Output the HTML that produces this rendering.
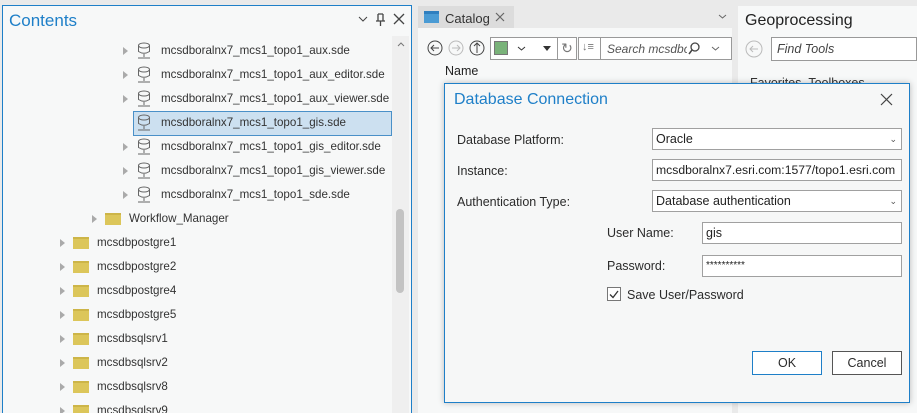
<!DOCTYPE html>
<html><head><style>
*{margin:0;padding:0;box-sizing:border-box}
html,body{width:917px;height:413px;overflow:hidden}
body{background:#eaeaea;font-family:"Liberation Sans",sans-serif;font-size:12.5px;color:#2b2b2b;position:relative}
.abs{position:absolute}
.row{position:absolute;height:24px;line-height:24px;white-space:nowrap;font-size:11.6px}
.tri{position:absolute;width:0;height:0;border-left:5px solid #aaa;border-top:4px solid transparent;border-bottom:4px solid transparent;top:8px}
.fold{position:absolute;width:16px;height:12px;background:#dcc65a;top:6px;border-top:2px solid #cdb548}
.lbl{position:absolute;color:#333}
.box{position:absolute;background:#fff;border:1px solid #a0a0a0;height:22px;line-height:20px;padding-left:3px;color:#222}
.chev{position:absolute;right:4px;top:0;font-size:9px;color:#555}
</style></head><body>
<svg width="0" height="0" style="position:absolute"><defs><symbol id="db" viewBox="0 0 14 18"><ellipse cx="7" cy="3.5" rx="5.5" ry="2.5" fill="none" stroke="#666"/><path d="M1.5 3.5v6q5.5 3.5 11 0v-6M7 12v3M1 16h12" fill="none" stroke="#666"/></symbol></defs></svg>
<!-- Contents panel -->
<div class="abs" style="left:2px;top:5px;width:410px;height:420px;background:#f7f8f8;border:1px solid #1e7fc8"></div>
<div class="abs" style="left:9px;top:11px;font-size:17px;color:#1e7fc8">Contents</div>
<svg class="abs" style="left:358px;top:16px" width="10" height="6"><path d="M1 1l4 4 4-4" fill="none" stroke="#444"/></svg>
<svg class="abs" style="left:375px;top:13px" width="10" height="14"><path d="M3 1h5M3 1v7h5V1M1 8h9M5.5 8v5" fill="none" stroke="#444" stroke-width="1.3"/></svg>
<svg class="abs" style="left:393px;top:13px" width="12" height="12"><path d="M1 1l10 10M11 1L1 11" stroke="#444" stroke-width="1.3"/></svg>
<div class="abs" style="left:392px;top:36px;width:17px;height:377px;background:#efefef"></div>
<div class="abs" style="left:396px;top:209px;width:8px;height:84px;background:#c3c3c3;border-radius:4px"></div>
<svg class="abs" style="left:397px;top:42px" width="8" height="5"><path d="M1 4l3-3 3 3" fill="none" stroke="#777"/></svg>
<div class="abs" style="left:133px;top:111px;width:259px;height:25px;background:#cce0f0;border:1px solid #4a90c8"></div>
<div class="row" style="top:39px;left:0"><div class="tri" style="left:123px"></div><svg class="abs" style="left:137px;top:3px" width="14" height="18"><use href="#db"/></svg><span class="lbl" style="left:161px">mcsdboralnx7_mcs1_topo1_aux.sde</span></div>
<div class="row" style="top:63px;left:0"><div class="tri" style="left:123px"></div><svg class="abs" style="left:137px;top:3px" width="14" height="18"><use href="#db"/></svg><span class="lbl" style="left:161px">mcsdboralnx7_mcs1_topo1_aux_editor.sde</span></div>
<div class="row" style="top:87px;left:0"><div class="tri" style="left:123px"></div><svg class="abs" style="left:137px;top:3px" width="14" height="18"><use href="#db"/></svg><span class="lbl" style="left:161px">mcsdboralnx7_mcs1_topo1_aux_viewer.sde</span></div>
<div class="row" style="top:111px;left:0"><svg class="abs" style="left:137px;top:3px" width="14" height="18"><use href="#db"/></svg><span class="lbl" style="left:161px">mcsdboralnx7_mcs1_topo1_gis.sde</span></div>
<div class="row" style="top:135px;left:0"><div class="tri" style="left:123px"></div><svg class="abs" style="left:137px;top:3px" width="14" height="18"><use href="#db"/></svg><span class="lbl" style="left:161px">mcsdboralnx7_mcs1_topo1_gis_editor.sde</span></div>
<div class="row" style="top:159px;left:0"><div class="tri" style="left:123px"></div><svg class="abs" style="left:137px;top:3px" width="14" height="18"><use href="#db"/></svg><span class="lbl" style="left:161px">mcsdboralnx7_mcs1_topo1_gis_viewer.sde</span></div>
<div class="row" style="top:183px;left:0"><div class="tri" style="left:123px"></div><svg class="abs" style="left:137px;top:3px" width="14" height="18"><use href="#db"/></svg><span class="lbl" style="left:161px">mcsdboralnx7_mcs1_topo1_sde.sde</span></div>
<div class="row" style="top:207px;left:0"><div class="tri" style="left:92px"></div><div class="fold" style="left:105px"></div><span class="lbl" style="left:129px">Workflow_Manager</span></div>
<div class="row" style="top:231px;left:0"><div class="tri" style="left:60px"></div><div class="fold" style="left:73px"></div><span class="lbl" style="left:97px">mcsdbpostgre1</span></div>
<div class="row" style="top:255px;left:0"><div class="tri" style="left:60px"></div><div class="fold" style="left:73px"></div><span class="lbl" style="left:97px">mcsdbpostgre2</span></div>
<div class="row" style="top:279px;left:0"><div class="tri" style="left:60px"></div><div class="fold" style="left:73px"></div><span class="lbl" style="left:97px">mcsdbpostgre4</span></div>
<div class="row" style="top:303px;left:0"><div class="tri" style="left:60px"></div><div class="fold" style="left:73px"></div><span class="lbl" style="left:97px">mcsdbpostgre5</span></div>
<div class="row" style="top:327px;left:0"><div class="tri" style="left:60px"></div><div class="fold" style="left:73px"></div><span class="lbl" style="left:97px">mcsdbsqlsrv1</span></div>
<div class="row" style="top:351px;left:0"><div class="tri" style="left:60px"></div><div class="fold" style="left:73px"></div><span class="lbl" style="left:97px">mcsdbsqlsrv2</span></div>
<div class="row" style="top:375px;left:0"><div class="tri" style="left:60px"></div><div class="fold" style="left:73px"></div><span class="lbl" style="left:97px">mcsdbsqlsrv8</span></div>
<div class="row" style="top:399px;left:0"><div class="tri" style="left:60px"></div><div class="fold" style="left:73px"></div><span class="lbl" style="left:97px">mcsdbsqlsrv9</span></div>

<!-- Catalog panel -->
<div class="abs" style="left:418px;top:6px;width:96px;height:22px;background:#dcdcdc"></div>
<div class="abs" style="left:424px;top:11px;width:15px;height:12px;background:#4a9bd4;border-top:3px solid #2f7fbf"></div>
<div class="abs" style="left:445px;top:11px;font-size:13px;color:#333">Catalog</div>
<svg class="abs" style="left:495px;top:12px" width="10" height="10"><path d="M1 1l8 8M9 1L1 9" stroke="#666" stroke-width="1.2"/></svg>
<svg class="abs" style="left:718px;top:14px" width="9" height="5"><path d="M1 1l3.5 3 3.5-3" fill="none" stroke="#666"/></svg>
<div class="abs" style="left:418px;top:28px;width:314px;height:385px;background:#f7f8f8"></div>
<svg class="abs" style="left:427px;top:39px" width="60" height="18"><circle cx="8" cy="9" r="7" fill="none" stroke="#444"/><path d="M12 9H4M7 6L4 9l3 3" fill="none" stroke="#444"/><circle cx="29" cy="9" r="7" fill="none" stroke="#bbb"/><path d="M25 9h8M30 6l3 3-3 3" fill="none" stroke="#bbb"/><circle cx="50" cy="9" r="7" fill="none" stroke="#444"/><path d="M50 14V4M47 7l3-3 3 3" fill="none" stroke="#444"/></svg>
<div class="abs" style="left:490px;top:37px;width:68px;height:23px;border:1px solid #999;background:#fff"></div>
<div class="abs" style="left:494px;top:41px;width:14px;height:14px;background:#7ab37a;border:1px solid #777"></div>
<svg class="abs" style="left:517px;top:46px" width="9" height="5"><path d="M1 1l3.5 3 3.5-3" fill="none" stroke="#333"/></svg>
<svg class="abs" style="left:543px;top:46px" width="8" height="5"><path d="M0 0h8L4 5z" fill="#333"/></svg>
<div class="abs" style="left:557px;top:37px;width:20px;height:23px;border:1px solid #999;background:#fff;font-size:14px;text-align:center;color:#777;line-height:20px">&#8635;</div>
<div class="abs" style="left:578px;top:37px;width:154px;height:23px;border:1px solid #999;background:#fff"></div>
<div class="abs" style="left:600px;top:37px;width:1px;height:23px;background:#999"></div>
<div class="abs" style="left:582px;top:41px;font-size:11px;color:#777">&#8595;&#8801;</div>
<div class="abs" style="left:607px;top:42px;font-style:italic;color:#555;font-size:12px;width:80px;overflow:hidden;white-space:nowrap">Search mcsdbora</div>
<svg class="abs" style="left:688px;top:42px" width="12" height="13"><circle cx="7" cy="5" r="4" fill="none" stroke="#444" stroke-width="1.3"/><path d="M4 8l-3 4" stroke="#444" stroke-width="1.5"/></svg>
<svg class="abs" style="left:711px;top:46px" width="9" height="5"><path d="M1 1l3.5 3 3.5-3" fill="none" stroke="#666"/></svg>
<div class="abs" style="left:445px;top:64px;color:#222">Name</div>

<!-- Geoprocessing -->
<div class="abs" style="left:738px;top:6px;width:179px;height:407px;background:#f7f8f8"></div>
<div class="abs" style="left:745px;top:12px;font-size:16px;color:#222">Geoprocessing</div>
<svg class="abs" style="left:745px;top:40px" width="18" height="18"><circle cx="9" cy="9" r="8" fill="none" stroke="#bbb"/><path d="M13 9H5M8 6L5 9l3 3" fill="none" stroke="#bbb"/></svg>
<div class="abs" style="left:771px;top:37px;width:146px;height:24px;border:1px solid #999;background:#fff"></div>
<div class="abs" style="left:777px;top:42px;font-style:italic;color:#444">Find Tools</div>
<div class="abs" style="left:750px;top:76px;color:#333">Favorites&nbsp;&nbsp;Toolboxes</div>

<!-- Dialog -->
<div class="abs" style="left:444px;top:83px;width:466px;height:320px;background:#f6f7f7;border:1px solid #1e7fc8;box-shadow:0 0 6px rgba(0,0,0,.25)"></div>
<div class="abs" style="left:454px;top:91px;font-size:16px;color:#1e7fc8">Database Connection</div>
<svg class="abs" style="left:880px;top:93px" width="13" height="13"><path d="M1 1l11 11M12 1L1 12" stroke="#444" stroke-width="1.2"/></svg>
<div class="abs" style="left:457px;top:133px">Database Platform:</div>
<div class="box" style="left:652px;top:128px;width:250px">Oracle<span class="chev">&#8964;</span></div>
<div class="abs" style="left:457px;top:164px">Instance:</div>
<div class="box" style="left:652px;top:159px;width:250px;font-size:12.2px">mcsdboralnx7.esri.com:1577/topo1.esri.com</div>
<div class="abs" style="left:457px;top:195px">Authentication Type:</div>
<div class="box" style="left:652px;top:190px;width:250px">Database authentication<span class="chev">&#8964;</span></div>
<div class="abs" style="left:607px;top:226px">User Name:</div>
<div class="box" style="left:702px;top:222px;width:200px">gis</div>
<div class="abs" style="left:607px;top:259px">Password:</div>
<div class="box" style="left:702px;top:255px;width:200px;font-size:10px">**********</div>
<div class="abs" style="left:607px;top:287px;width:14px;height:14px;border:1px solid #777;background:#fff"></div>
<svg class="abs" style="left:609px;top:290px" width="10" height="9"><path d="M1 4.5l3 3 5-6.5" fill="none" stroke="#333" stroke-width="1.3"/></svg>
<div class="abs" style="left:627px;top:288px">Save User/Password</div>
<div class="abs" style="left:752px;top:351px;width:70px;height:24px;border:1px solid #1e7fc8;background:#fff;text-align:center;line-height:22px">OK</div>
<div class="abs" style="left:832px;top:351px;width:70px;height:24px;border:1px solid #555;background:#fff;text-align:center;line-height:22px">Cancel</div>
</body></html>
